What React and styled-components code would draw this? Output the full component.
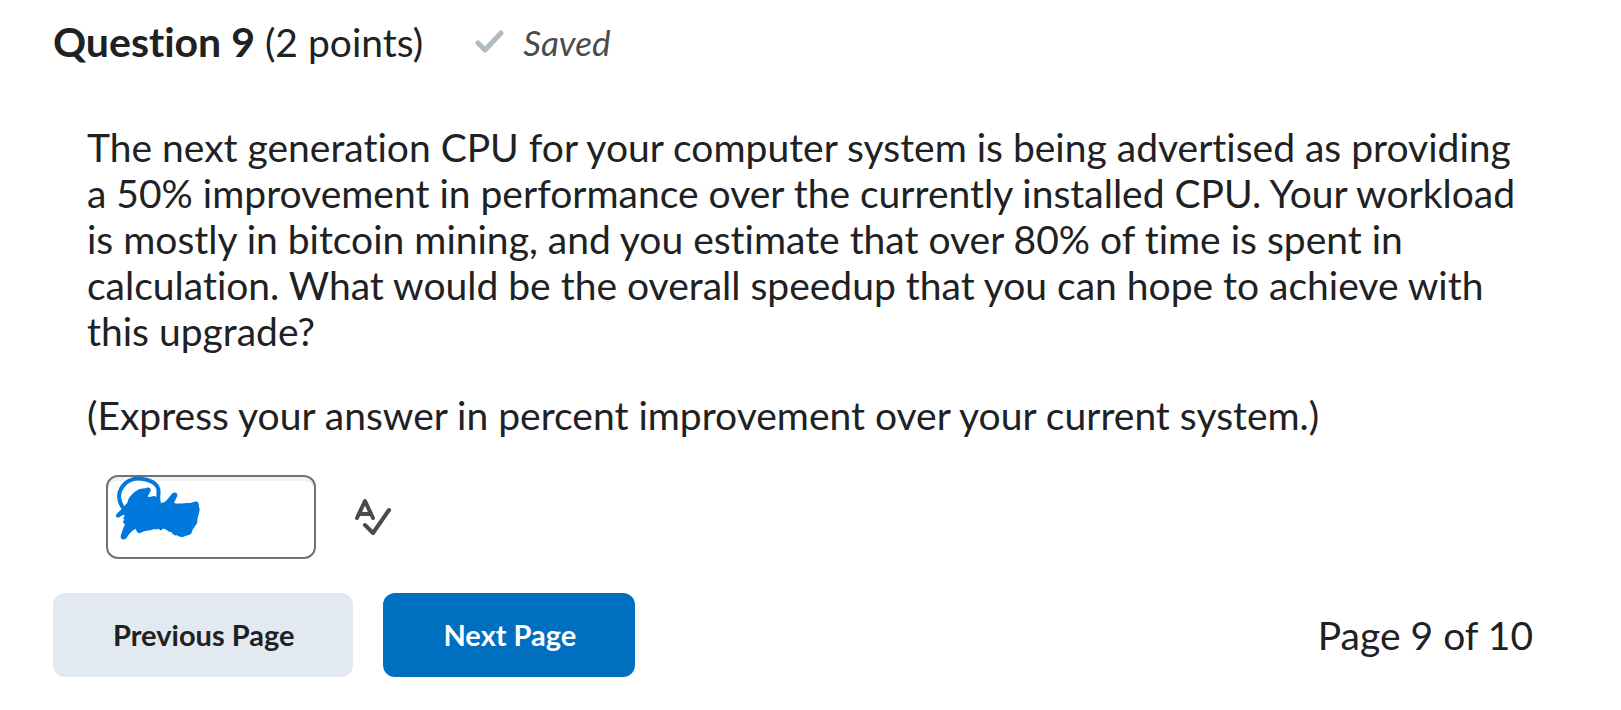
import React from "react";
import styled, { createGlobalStyle } from "styled-components";

const Global = createGlobalStyle`
  * { box-sizing: border-box; }
  body {
    margin: 0;
    background: #fff;
    color: #202122;
    font-family: Lato, sans-serif;
    font-variant-ligatures: none;
  }
`;
const Page = styled.main`
  padding: 15px 53px 33px;
`;
const Header = styled.header`
  display: flex;
  align-items: center;
  height: 54px;
`;
const Title = styled.h1`
  margin: 0 52px 0 0;
  font-size: 41px;
  line-height: 46px;
  font-weight: 700;
`;
const Points = styled.span`
  font-size: 39px;
  font-weight: 400;
`;
const Status = styled.div`
  display: flex;
  align-items: center;
  gap: 18px;
  font-size: 35px;
  line-height: 46px;
  font-style: italic;
  color: #494c4e;
`;
const Body = styled.section`
  padding: 55px 42px 0 34px;
  font-size: 39px;
  line-height: 46px;
`;
const Paragraph = styled.p`
  margin: 0;
  & + & {
    margin-top: 38px;
  }
`;
const AnswerRow = styled.div`
  display: flex;
  align-items: center;
  gap: 38px;
  margin-top: 37px;
  padding-left: 19px;
`;
const Field = styled.div`
  position: relative;
  width: 210px;
  height: 84px;
`;
const Input = styled.input`
  width: 100%;
  height: 100%;
  border: 2px solid #6e7376;
  border-radius: 12px;
  background: #fff;
  box-shadow: inset 0 4px 0 #f1f2f3;
  padding: 0 20px;
  font: inherit;
`;
const Scribble = styled.svg`
  position: absolute;
  left: 8px;
  top: 0;
  pointer-events: none;
`;
const IconButton = styled.button`
  display: flex;
  border: 0;
  padding: 0;
  background: none;
`;
const Footer = styled.footer`
  display: flex;
  align-items: center;
  gap: 30px;
  margin-top: 34px;
`;
const Button = styled.button`
  height: 84px;
  padding: 0 59px 0 60px;
  border: 0;
  border-radius: 12px;
  font: 700 29px/42px Lato, sans-serif;
  font-variant-ligatures: none;
  color: ${(p) => (p.$primary ? "#fff" : "#202122")};
  background: ${(p) => (p.$primary ? "#006fbf" : "#e3e9f1")};
`;
const PageCount = styled.span`
  margin-left: auto;
  padding-right: 35px;
  font-size: 39px;
  line-height: 46px;
`;

export default function App() {
  return (
    <Page>
      <Global />
      <Header>
        <Title>Question 9 <Points>(2 points)</Points></Title>
        <Status>
          <svg width="30" height="24" viewBox="0 0 30 24" fill="none" stroke="#b1bbc0" strokeWidth="5" strokeLinecap="round" strokeLinejoin="round" aria-hidden="true">
            <path d="M3 13l7 7L26 3" />
          </svg>
          Saved
        </Status>
      </Header>
      <Body>
        <Paragraph>
          The next generation CPU for your computer system is being advertised as providing a 50% improvement in performance over the currently installed CPU. Your workload is mostly in bitcoin mining, and you estimate that over 80% of time is spent in calculation. What would be the overall speedup that you can hope to achieve with this upgrade?
        </Paragraph>
        <Paragraph>(Express your answer in percent improvement over your current system.)</Paragraph>
        <AnswerRow>
          <Field>
            <Input aria-label="Answer" />
            <Scribble width="90" height="65" viewBox="12 15 270 195" aria-hidden="true">
              <path d="M147 178l6 3 4-5z" fill="#111" />
              <path
                d="M41 117C26 95 23 74 34 55C46 34 69 24 93 26C119 28 141 40 145 58C147 68 143 83 146 96"
                fill="none" stroke="#0078dc" strokeWidth="12" strokeLinecap="round"
              />
              <path
                d="M18 135C22 127 32 122 38 114L52 98C55 82 68 69 82 61C91 53 101 58 108 54C119 50 125 57 121 65L113 79C119 84 127 76 134 78C143 82 150 91 151 98C162 100 168 94 175 85L187 70C194 64 204 68 202 77L192 99C204 103 223 99 238 99C248 99 255 92 263 96C268 100 266 110 269 119C267 133 261 144 262 157C257 169 249 174 245 188C239 197 229 195 221 200C215 202 206 201 201 196C194 198 188 193 184 186C175 187 172 179 163 176C151 177 141 177 131 178C117 183 104 182 97 186C92 190 85 191 81 186L77 176C66 181 58 190 51 202C47 209 39 210 34 206C29 201 35 190 37 182L45 163C39 160 37 154 43 149C39 145 40 140 45 137C41 132 34 136 29 141C22 145 16 141 18 135Z"
                fill="#0078dc"
              />
            </Scribble>
          </Field>
          <IconButton aria-label="Check spelling">
            <svg width="38" height="38" viewBox="0 0 38 38" fill="none" stroke="#494c4e" strokeWidth="4" strokeLinecap="round" strokeLinejoin="round">
              <path d="M3 20L11 3l8 17M6 16h10M11 27l8 8L35 12" />
            </svg>
          </IconButton>
        </AnswerRow>
      </Body>
      <Footer>
        <Button>Previous Page</Button>
        <Button $primary>Next Page</Button>
        <PageCount>Page 9 of 10</PageCount>
      </Footer>
    </Page>
  );
}
